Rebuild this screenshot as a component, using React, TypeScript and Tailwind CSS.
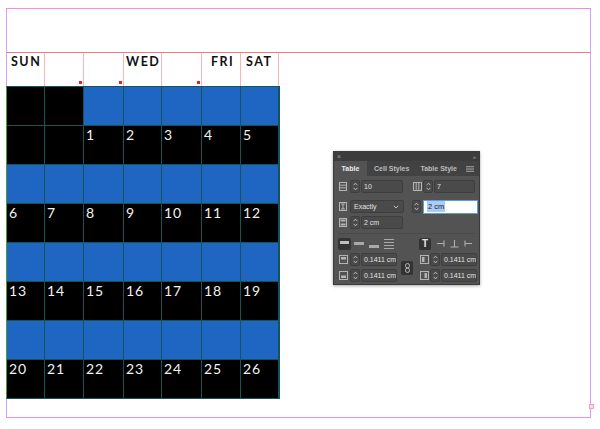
import React from "react";

const COLS = "grid-cols-[37px_38px_39px_37px_39px_38px_37px]";

type Cell = { c: "k" | "b"; n?: string };

const k = (n?: string): Cell => ({ c: "k", n });
const b = (): Cell => ({ c: "b" });

const rows: Cell[][] = [
  [k(), k(), b(), b(), b(), b(), b()],
  [k(), k(), k("1"), k("2"), k("3"), k("4"), k("5")],
  [b(), b(), b(), b(), b(), b(), b()],
  ["6", "7", "8", "9", "10", "11", "12"].map((n) => k(n)),
  [b(), b(), b(), b(), b(), b(), b()],
  ["13", "14", "15", "16", "17", "18", "19"].map((n) => k(n)),
  [b(), b(), b(), b(), b(), b(), b()],
  ["20", "21", "22", "23", "24", "25", "26"].map((n) => k(n)),
];

const headers: { t: string; pad: string }[] = [
  { t: "SUN", pad: "pl-[4px]" },
  { t: "", pad: "pl-[4px]" },
  { t: "", pad: "pl-[4px]" },
  { t: "WED", pad: "pl-[2px]" },
  { t: "", pad: "pl-[4px]" },
  { t: "FRI", pad: "pl-[9px]" },
  { t: "SAT", pad: "pl-[5px]" },
];
const dots = [false, true, true, false, true, false, false];

const ICON = "#b4b4b4";

function Chev() {
  return (
    <svg width="5" height="9" viewBox="0 0 5 9">
      <path d="M0.6 3.2 L2.5 1.2 L4.4 3.2 M0.6 5.8 L2.5 7.8 L4.4 5.8" stroke="#c9c9c9" fill="none" strokeWidth="0.9" />
    </svg>
  );
}

function Spinner({ value, cls }: { value: string; cls: string }) {
  return (
    <div className={`flex h-[13px] ${cls}`}>
      <div className="w-[10px] shrink-0 h-full rounded-[2px] border border-[#3e3e3e] bg-[#4a4a4a] flex items-center justify-center">
        <Chev />
      </div>
      <div className="flex-1 ml-px h-full rounded-[2px] border border-[#3e3e3e] bg-[#4a4a4a] flex items-center pl-[2px] text-[7px] text-[#e2e2e2] leading-none whitespace-nowrap overflow-hidden">
        {value}
      </div>
    </div>
  );
}

function RowsIcon() {
  return (
    <svg width="8" height="9" viewBox="0 0 8 9">
      <rect x="0.5" y="0.5" width="7" height="8" fill="none" stroke={ICON} />
      <path d="M0.5 3.2 H7.5 M0.5 5.8 H7.5" stroke={ICON} />
    </svg>
  );
}
function ColsIcon() {
  return (
    <svg width="9" height="9" viewBox="0 0 9 9">
      <rect x="0.5" y="0.5" width="8" height="8" fill="none" stroke={ICON} />
      <path d="M3.2 0.5 V8.5 M5.8 0.5 V8.5" stroke={ICON} />
    </svg>
  );
}
function RowHeightIcon() {
  return (
    <svg width="8" height="9" viewBox="0 0 8 9">
      <rect x="0.5" y="0.5" width="7" height="8" fill="none" stroke={ICON} />
      <path d="M2 2 H6 M4 2 V7 M2 7 H6" stroke={ICON} />
    </svg>
  );
}
function ColWidthIcon() {
  return (
    <svg width="8" height="9" viewBox="0 0 8 9">
      <rect x="0.5" y="0.5" width="7" height="8" fill="none" stroke={ICON} />
      <rect x="1.5" y="1.5" width="5" height="2" fill={ICON} />
      <rect x="1.5" y="5.5" width="5" height="2" fill={ICON} />
    </svg>
  );
}
function InsetIcon({ v }: { v: "t" | "b" | "l" | "r" }) {
  return (
    <svg width="9" height="9" viewBox="0 0 9 9">
      <rect x="0.5" y="0.5" width="8" height="8" fill="none" stroke={ICON} />
      {v === "t" && <rect x="2" y="2" width="5" height="2.5" fill={ICON} />}
      {v === "b" && <rect x="2" y="4.5" width="5" height="2.5" fill={ICON} />}
      {v === "l" && <rect x="2" y="2" width="2.5" height="5" fill={ICON} />}
      {v === "r" && <rect x="4.5" y="2" width="2.5" height="5" fill={ICON} />}
    </svg>
  );
}

function Panel() {
  return (
    <div className="absolute left-[333px] top-[151px] w-[147px] h-[134px] bg-[#535353] border border-[#3a3a3a] font-['Liberation_Sans',sans-serif] shadow-[0_1px_3px_rgba(0,0,0,0.35)] flex flex-col">
      {/* title bar */}
      <div className="h-[9px] bg-[#3c3c3c] flex items-center justify-between px-[3px] text-[7px] leading-none text-[#9d9d9d]">
        <span>×</span>
        <span className="text-[6px]">«</span>
      </div>
      {/* tabs */}
      <div className="h-[15px] bg-[#424242] flex items-stretch text-[7px] font-bold leading-none whitespace-nowrap">
        <div className="w-[33px] bg-[#535353] flex items-center justify-center text-[#ececec]">Table</div>
        <div className="ml-[7px] flex items-center text-[#bdbdbd]">Cell Styles</div>
        <div className="ml-[11px] flex items-center text-[#bdbdbd]">Table Style</div>
        <div className="ml-auto mr-[5px] flex items-center">
          <svg width="8" height="6" viewBox="0 0 8 6">
            <path d="M0 0.75 H8 M0 3 H8 M0 5.25 H8" stroke="#a8a8a8" strokeWidth="1.2" />
          </svg>
        </div>
      </div>
      {/* row 1 */}
      <div className="flex items-center h-[13px] mt-[4px]">
        <div className="ml-[4px] w-[9px] flex justify-center"><RowsIcon /></div>
        <Spinner value="10" cls="ml-[3px] w-[53px]" />
        <div className="ml-[10px] w-[9px] flex justify-center"><ColsIcon /></div>
        <Spinner value="7" cls="ml-[1px] w-[52px]" />
      </div>
      {/* row 2 */}
      <div className="flex items-center h-[13px] mt-[7px]">
        <div className="ml-[4px] w-[9px] flex justify-center"><RowHeightIcon /></div>
        <div className="ml-[3px] w-[54px] h-[13px] rounded-[2px] border border-[#3e3e3e] bg-[#4a4a4a] flex items-center justify-between pl-[3px] pr-[4px] text-[7px] text-[#e2e2e2] leading-none">
          <span>Exactly</span>
          <svg width="6" height="4" viewBox="0 0 6 4"><path d="M0.8 0.8 L3 3 L5.2 0.8" stroke="#c9c9c9" fill="none" strokeWidth="0.9" /></svg>
        </div>
        <div className="ml-[8px] w-[9px] h-[13px] rounded-[2px] border border-[#3e3e3e] bg-[#4a4a4a] flex items-center justify-center">
          <Chev />
        </div>
        <div className="ml-[2px] w-[55px] h-[14px] bg-white border border-[#5c9be6] flex items-center pl-[3px] text-[7.5px] leading-none text-[#1a1a1a]">
          <span className="bg-[#a9cdf7] px-px py-[2px]">2 cm</span>
        </div>
      </div>
      {/* row 3 */}
      <div className="flex items-center h-[13px] mt-[3px]">
        <div className="ml-[4px] w-[9px] flex justify-center"><ColWidthIcon /></div>
        <Spinner value="2 cm" cls="ml-[3px] w-[53px]" />
      </div>
      <div className="mx-[4px] mt-[4px] border-t border-[#4a4a4a]" />
      {/* row 4: alignment */}
      <div className="flex items-center h-[13px] mt-[3px]">
        <div className="ml-[4px] w-[13px] h-[12px] rounded-[2px] bg-[#333333] flex items-start justify-center pt-[3px]">
          <div className="w-[9px] h-[3px] bg-[#bdbdbd]" />
        </div>
        <div className="ml-[3px] w-[10px] h-[12px] flex items-center">
          <div className="w-[10px] h-[3px] bg-[#a9a9a9]" />
        </div>
        <div className="ml-[5px] w-[10px] h-[12px] flex items-end pb-[2px]">
          <div className="w-[10px] h-[3px] bg-[#a9a9a9]" />
        </div>
        <div className="ml-[5px] w-[10px] h-[12px] flex flex-col justify-center gap-[2px]">
          <div className="w-[10px] h-px bg-[#a9a9a9]" />
          <div className="w-[10px] h-px bg-[#a9a9a9]" />
          <div className="w-[10px] h-px bg-[#a9a9a9]" />
          <div className="w-[10px] h-px bg-[#a9a9a9]" />
        </div>
        <div className="ml-[25px] w-[12px] h-[12px] rounded-[2px] bg-[#333333] flex items-center justify-center text-[10px] font-bold leading-none text-[#e4e4e4]">
          T
        </div>
        <div className="ml-[5px] w-[9px] h-[12px] flex items-center justify-center">
          <svg width="8" height="7" viewBox="0 0 8 7"><path d="M0 3.5 H7 M7 0.5 V6.5" stroke="#b0b0b0" strokeWidth="1.1" /></svg>
        </div>
        <div className="ml-[4px] w-[10px] h-[12px] flex items-center justify-center">
          <svg width="9" height="8" viewBox="0 0 9 8"><path d="M4.5 0 V7 M0.5 7 H8.5" stroke="#b0b0b0" strokeWidth="1.1" /></svg>
        </div>
        <div className="ml-[4px] w-[9px] h-[12px] flex items-center justify-center">
          <svg width="8" height="7" viewBox="0 0 8 7"><path d="M1 0.5 V6.5 M1 3.5 H8" stroke="#b0b0b0" strokeWidth="1.1" /></svg>
        </div>
      </div>
      {/* rows 5-6: insets */}
      <div className="flex items-center mt-[3px]">
        <div className="flex flex-col gap-[3px]">
          <div className="flex items-center h-[13px]">
            <div className="ml-[4px] w-[10px] flex justify-center"><InsetIcon v="t" /></div>
            <Spinner value="0.1411 cm" cls="ml-[2px] w-[47px]" />
          </div>
          <div className="flex items-center h-[13px]">
            <div className="ml-[4px] w-[10px] flex justify-center"><InsetIcon v="b" /></div>
            <Spinner value="0.1411 cm" cls="ml-[2px] w-[47px]" />
          </div>
        </div>
        <div className="ml-[4px] w-[12px] h-[14px] rounded-[2px] bg-[#333333] flex items-center justify-center">
          <svg width="5" height="10" viewBox="0 0 5 10">
            <rect x="0.6" y="0.6" width="3.8" height="4.2" rx="1.6" fill="none" stroke="#c4c4c4" strokeWidth="0.9" />
            <rect x="0.6" y="5.2" width="3.8" height="4.2" rx="1.6" fill="none" stroke="#c4c4c4" strokeWidth="0.9" />
          </svg>
        </div>
        <div className="flex flex-col gap-[3px]">
          <div className="flex items-center h-[13px]">
            <div className="ml-[6px] w-[10px] flex justify-center"><InsetIcon v="l" /></div>
            <Spinner value="0.1411 cm" cls="ml-[1px] w-[47px]" />
          </div>
          <div className="flex items-center h-[13px]">
            <div className="ml-[6px] w-[10px] flex justify-center"><InsetIcon v="r" /></div>
            <Spinner value="0.1411 cm" cls="ml-[1px] w-[47px]" />
          </div>
        </div>
      </div>
    </div>
  );
}

export default function App() {
  return (
    <div className="relative w-[600px] h-[429px] bg-white overflow-hidden">
      <div className="ml-[6px] mt-[8px] w-[585px] h-[410px] border-t border-b border-l border-r border-t-[#f28af2] border-b-[#f28af2] border-l-[#d3a0f8] border-r-[#d3a0f8] flex flex-col">
        <div className="h-[44px] border-b border-[#f27a86] shrink-0" />
        {/* header row */}
        <div className={`grid ${COLS} gap-px w-[272px] bg-[#f7b6ba] border-r border-[#f7b6ba] h-[33px] shrink-0`}>
          {headers.map((h, i) => (
            <div key={i} className={`relative bg-white ${h.pad} pt-[3px] font-['Lato',sans-serif] font-bold text-[12.5px] leading-none tracking-[1.5px] text-[#111]`}>
              {h.t}
              {dots[i] && <div className="absolute right-[1px] bottom-[2px] w-[3px] h-[3px] bg-[#ee1c24]" />}
            </div>
          ))}
        </div>
        {/* table */}
        <div className={`-ml-px w-[274px] grid ${COLS} gap-px bg-[#14555c] border border-[#14555c] border-l-[#4f9a3c]`}>
          {rows.flatMap((r, ri) =>
            r.map((c, ci) => (
              <div
                key={`${ri}-${ci}`}
                className={`h-[38px] ${c.c === "k" ? "bg-black" : "bg-[#1e66c2]"} pl-[2px] pt-[2px] font-['Lato',sans-serif] text-[14px] leading-none tracking-[0.8px] text-[#f2f2f2]`}
              >
                {c.n}
              </div>
            ))
          )}
        </div>
      </div>
      <div className="absolute left-[589px] top-[404px] w-[5px] h-[5px] border border-[#f3a0b4] bg-[#fbd9e2]" />
      <Panel />
    </div>
  );
}
